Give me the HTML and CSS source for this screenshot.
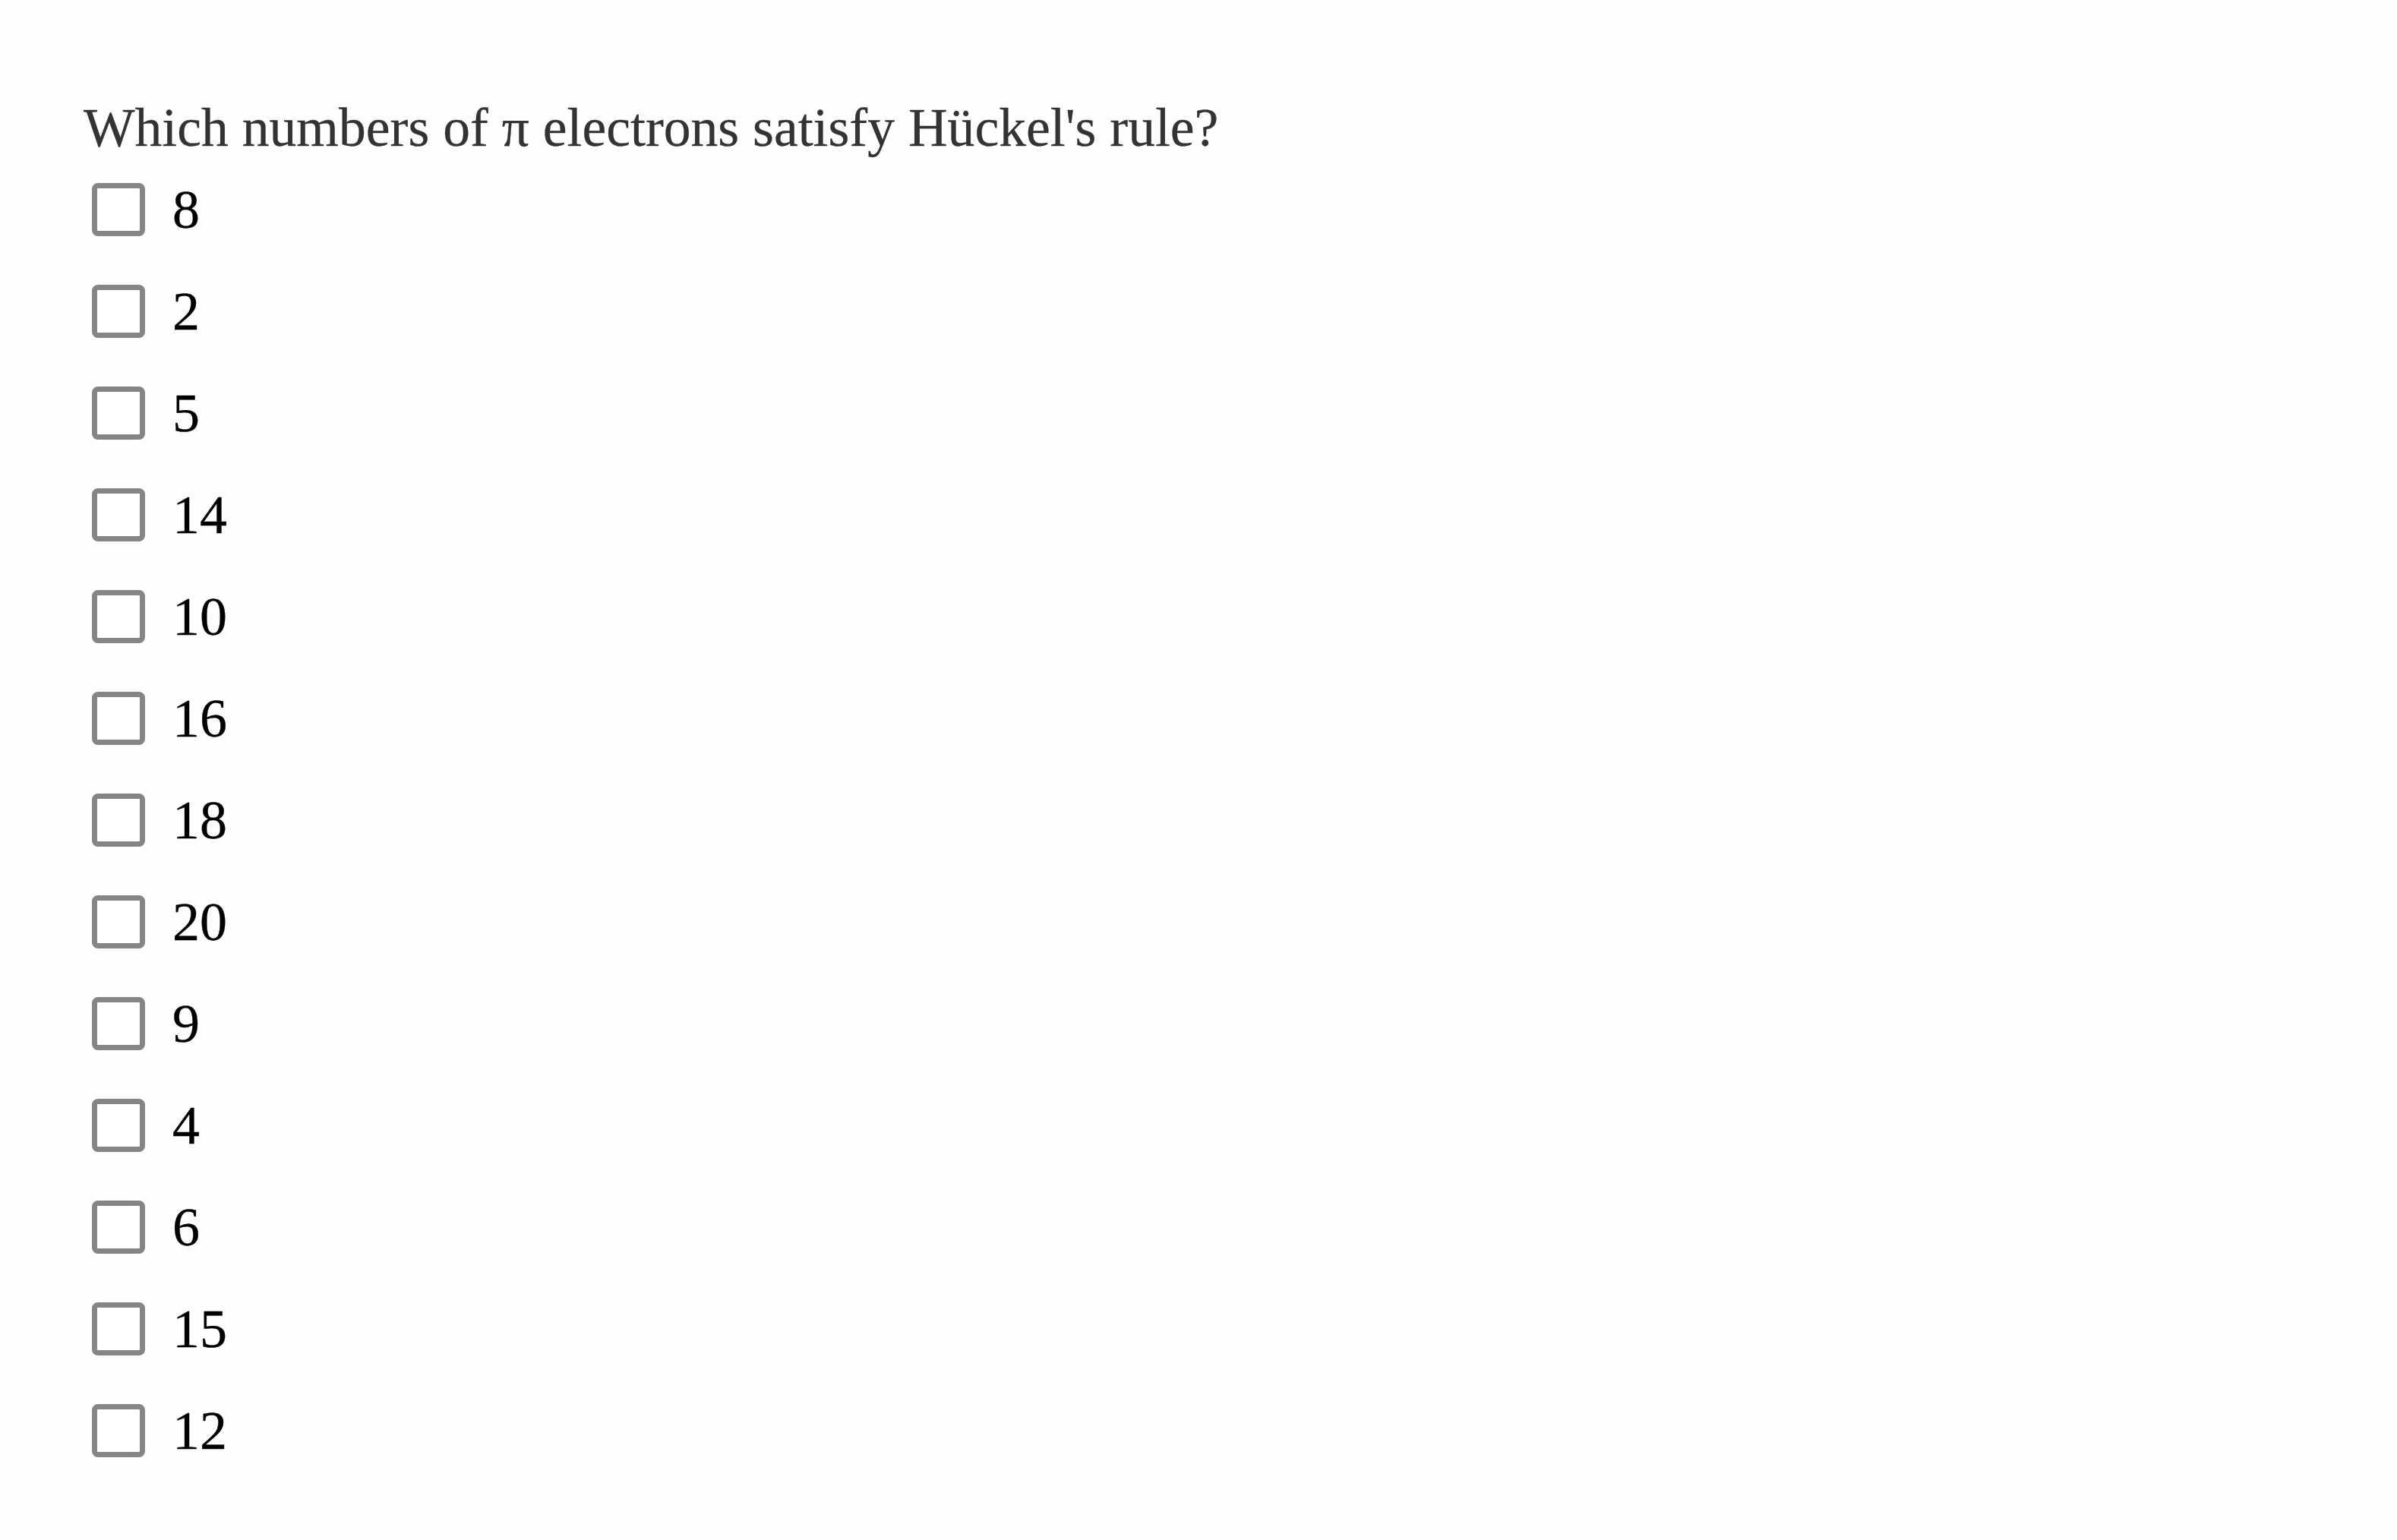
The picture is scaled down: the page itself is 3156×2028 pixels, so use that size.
FILE: index.html
```html
<!DOCTYPE html>
<html lang="en">
  <head>
    <meta charset="UTF-8" />
    <meta name="viewport" content="width=device-width, initial-scale=1.0" />
    <title>Hückel's rule</title>
    <link rel="stylesheet" href="styles.css">
  </head>
  <body>
    <div class="quiz" id="quiz">
      <h1 class="question">Which numbers of π electrons satisfy Hückel's rule?</h1>
      <div class="options">
        <label class="option"><input type="checkbox" value="8" /><span>8</span></label>
        <label class="option"><input type="checkbox" value="2" /><span>2</span></label>
        <label class="option"><input type="checkbox" value="5" /><span>5</span></label>
        <label class="option"><input type="checkbox" value="14" /><span>14</span></label>
        <label class="option"><input type="checkbox" value="10" /><span>10</span></label>
        <label class="option"><input type="checkbox" value="16" /><span>16</span></label>
        <label class="option"><input type="checkbox" value="18" /><span>18</span></label>
        <label class="option"><input type="checkbox" value="20" /><span>20</span></label>
        <label class="option"><input type="checkbox" value="9" /><span>9</span></label>
        <label class="option"><input type="checkbox" value="4" /><span>4</span></label>
        <label class="option"><input type="checkbox" value="6" /><span>6</span></label>
        <label class="option"><input type="checkbox" value="15" /><span>15</span></label>
        <label class="option"><input type="checkbox" value="12" /><span>12</span></label>
      </div>
    </div>
  </body>
</html>
```

FILE: styles.css
```css
body {
  margin: 0;
  background-color: #fefefe;
  font-family: "Liberation Serif", "Times New Roman", serif;
  color: #000;
}
.quiz {
  padding: 128px 0 0 110px;
}
.question {
  margin: 0;
  font-size: 71.6px;
  font-weight: normal;
  line-height: 80px;
  color: #333;
  -webkit-text-stroke: 0.3px #333;
}
.options {
  display: flex;
  flex-direction: column;
  margin-top: 1px;
}
.option {
  display: flex;
  align-items: center;
  height: 134px;
  font-size: 72px;
  -webkit-text-stroke: 0.3px #000;
}
/* big grey square boxes */
.option input {
  appearance: none;
  -webkit-appearance: none;
  width: 70px;
  height: 70px;
  margin: 0 36px 0 11px;
  border: 7px solid #858585;
  border-radius: 8px;
  background-color: #fff;
  box-sizing: border-box;
  cursor: pointer;
}
.option input:checked {
  background-color: #858585;
}
```
